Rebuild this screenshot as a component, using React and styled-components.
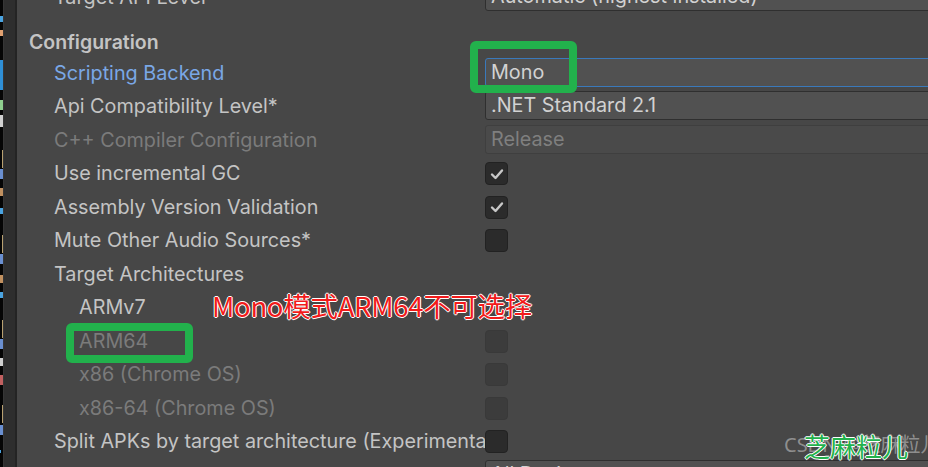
import React from 'react'
import styled, { createGlobalStyle } from 'styled-components'

const Global = createGlobalStyle`
  html, body { margin: 0; padding: 0; background: #474747; overflow: hidden; }
  body { font-family: Inter, "Noto Sans", "Noto Sans CJK SC", sans-serif; }
`

const Page = styled.div`
  position: relative;
  width: 928px;
  height: 467px;
  display: flex;
  overflow: hidden;
  background: #474747;
`

const Gutter = styled.div`
  width: 17px;
  flex: none;
  display: flex;
  background: #2e2e2e;
  border-right: 2px solid #242424;
  box-sizing: border-box;
`

const Strip = styled.svg`
  width: 3px;
  height: 467px;
  display: block;
  margin-right: 3px;
  border-right: 1px solid #363636;
`

const Panel = styled.div`
  flex: 1;
  display: flex;
  flex-direction: column;
  margin-top: -19px;
`

const Row = styled.div`
  display: grid;
  grid-template-columns: 468px 1fr;
  height: 33.5px;
  flex: none;
  position: relative;
`

const Header = styled.div`
  height: 30px;
  margin-top: 12px;
  flex: none;
  padding-left: 12px;
  line-height: 30px;
  font-size: 19.5px;
  font-weight: 600;
  color: #c4c4c4;
`

const Label = styled.div`
  padding-left: ${p => 37 + p.$level * 25}px;
  line-height: 33.5px;
  font-size: 19.8px;
  white-space: nowrap;
  overflow: hidden;
  color: ${p => (p.$tone === 'blue' ? '#7aa7e6' : p.$tone === 'off' ? '#7b7b7b' : '#c4c4c4')};
`

const Value = styled.div`
  padding-top: 1px;
  margin-right: -12px;
`

const Field = styled.div`
  height: 29px;
  box-sizing: border-box;
  padding-left: 5px;
  line-height: 27px;
  font-size: 19.8px;
  border-radius: 3px;
  white-space: nowrap;
  background: ${p => (p.$off ? '#4a4a4a' : '#515151')};
  border: 1px solid ${p => (p.$focus ? '#3a79bb' : p.$off ? '#3f3f3f' : '#2f2f2f')};
  color: ${p => (p.$off ? '#7f7f7f' : '#d2d2d2')};
`

const Box = styled.div`
  width: 23px;
  height: 23px;
  margin-top: 4px;
  box-sizing: border-box;
  border-radius: 4px;
  display: flex;
  align-items: center;
  justify-content: center;
  background: ${p => (p.$off ? '#3c3c3c' : '#2b2b2b')};
  border: 1px solid ${p => (p.$off ? '#393939' : '#222')};
`

const Mark = styled.svg`
  width: 16px;
  height: 16px;
`

const Frame = styled.div`
  position: absolute;
  box-sizing: border-box;
  border: 8px solid #22b14c;
  border-radius: 6px;
  left: ${p => p.$x}px;
  top: ${p => p.$y}px;
  width: ${p => p.$w}px;
  height: ${p => p.$h}px;
`

const Note = styled.div`
  position: absolute;
  left: 212px;
  top: 287px;
  font-family: "Noto Sans CJK SC", "Noto Sans", sans-serif;
  font-size: 27.5px;
  line-height: 36px;
  color: #f21b1b;
  letter-spacing: -0.3px;
  text-shadow: 1px 0 #fff, -1px 0 #fff, 0 1px #fff, 0 -1px #fff;
`

const Watermark = styled.div`
  position: absolute;
  left: 784px;
  top: 432px;
  font-family: "Noto Sans", "Noto Sans CJK SC", sans-serif;
  font-size: 20px;
  line-height: 26px;
  color: rgba(205, 205, 205, 0.55);
  white-space: nowrap;
`

const Signature = styled.div`
  position: absolute;
  left: 804px;
  top: 428px;
  font-family: "Noto Sans CJK SC", sans-serif;
  font-size: 26px;
  line-height: 36px;
  color: #22b14c;
  text-shadow: 1px 0 #fff, -1px 0 #fff, 0 1px #fff, 0 -1px #fff;
`

const Check = () => (
  <Mark viewBox="0 0 16 16">
    <polyline points="3,8.5 6.5,12 13,4.5" fill="none" stroke="#c8c8c8" strokeWidth="2.4" strokeLinecap="round" strokeLinejoin="round" />
  </Mark>
)

const rows = [
  { label: 'Scripting Backend', tone: 'blue', field: 'Mono', focus: true },
  { label: 'Api Compatibility Level*', field: '.NET Standard 2.1' },
  { label: 'C++ Compiler Configuration', tone: 'off', field: 'Release', off: true },
  { label: 'Use incremental GC', check: true },
  { label: 'Assembly Version Validation', check: true },
  { label: 'Mute Other Audio Sources*', check: false },
  { label: 'Target Architectures' },
  { label: 'ARMv7', level: 1 },
  { label: 'ARM64', level: 1, tone: 'off', check: false, off: true },
  { label: 'x86 (Chrome OS)', level: 1, tone: 'off', check: false, off: true },
  { label: 'x86-64 (Chrome OS)', level: 1, tone: 'off', check: false, off: true },
  { label: 'Split APKs by target architecture (Experimental)', check: false },
  { label: '', field: 'All Devices' },
]

// bits of the neighbouring window at the left edge
const StripArt = () => (
  <Strip viewBox="0 0 3 467" preserveAspectRatio="none">
    <rect width="3" height="467" fill="#050505" />
    <rect x="0" y="16" width="3" height="6" fill="#4aa3e0" />
    <rect x="0" y="30" width="3" height="6" fill="#e0a070" />
    <rect x="0" y="60" width="3" height="30" fill="#2f8fd6" />
    <rect x="0" y="100" width="3" height="10" fill="#8fd08f" />
    <rect x="0" y="115" width="3" height="12" fill="#d0d0d0" />
    <rect x="2" y="150" width="1" height="18" fill="#b8a070" />
    <rect x="0" y="169" width="3" height="10" fill="#6a8fd0" />
    <rect x="0" y="188" width="3" height="8" fill="#c09060" />
    <rect x="0" y="208" width="3" height="6" fill="#4aa3e0" />
    <rect x="2" y="235" width="1" height="18" fill="#b8a070" />
    <rect x="0" y="254" width="3" height="10" fill="#6a8fd0" />
    <rect x="0" y="275" width="3" height="8" fill="#c09060" />
    <rect x="0" y="292" width="3" height="6" fill="#4aa3e0" />
    <rect x="2" y="320" width="1" height="18" fill="#b8a070" />
    <rect x="0" y="339" width="3" height="10" fill="#6a8fd0" />
    <rect x="0" y="358" width="3" height="8" fill="#d0d0d0" />
    <rect x="0" y="375" width="3" height="10" fill="#c06060" />
    <rect x="2" y="405" width="1" height="18" fill="#b8a070" />
    <rect x="0" y="425" width="3" height="10" fill="#6a8fd0" />
    <rect x="0" y="450" width="1" height="3" fill="#4aa3e0" />
  </Strip>
)

const App = () => {
  return (
    <Page>
      <Global />
      <Gutter>
        <StripArt />
      </Gutter>
      <Panel>
        <Row>
          <Label $level={0}>Target API Level</Label>
          <Value>
            <Field>Automatic (highest installed)</Field>
          </Value>
        </Row>
        <Header>Configuration</Header>
        {rows.map((r, i) => (
          <Row key={i}>
            <Label $level={r.level || 0} $tone={r.tone}>{r.label}</Label>
            <Value>
              {r.field && (
                <Field $focus={r.focus} $off={r.off}>{r.field}</Field>
              )}
              {r.check !== undefined && (
                <Box $off={r.off}>{r.check && <Check />}</Box>
              )}
            </Value>
          </Row>
        ))}
      </Panel>
      <Frame $x={470} $y={41} $w={107} $h={52} />
      <Frame $x={66} $y={323} $w={127} $h={40} />
      <Note>Mono模式ARM64不可选择</Note>
      <Watermark>CSDN @芝麻粒儿</Watermark>
      <Signature>芝麻粒儿</Signature>
    </Page>
  )
}

export default App
